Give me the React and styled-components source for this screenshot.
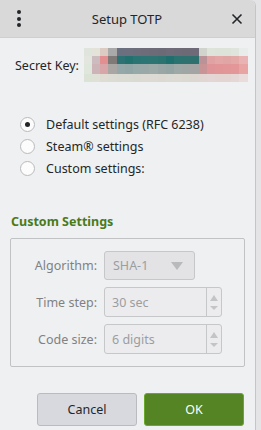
import React, { useState } from "react";
import styled, { createGlobalStyle } from "styled-components";

const Global = createGlobalStyle`
  html, body { margin: 0; padding: 0; background: #e4e4e6; }
  body { font-family: "Noto Sans", "DejaVu Sans", sans-serif; font-size: 12.5px; color: #232629; }
  * { box-sizing: border-box; }
`;

const Window = styled.div`
  width: 256px;
  height: 430px;
  background: #eff0f1;
  border-right: 1px solid #c4c5c7;
  border-top-right-radius: 6px;
  display: flex;
  flex-direction: column;
  overflow: hidden;
`;

const TitleBar = styled.div`
  height: 38px;
  background: #d9d9da;
  border-bottom: 1px solid #cfcfd1;
  display: flex;
  align-items: center;
  justify-content: space-between;
  padding: 0 12px 0 15px;
  flex-shrink: 0;
`;

const Title = styled.div`
  font-size: 13px;
  color: #232629;
`;

const Dots = styled.div`
  display: flex;
  flex-direction: column;
  gap: 2.5px;
  width: 8px;
  align-items: center;
  span {
    width: 4px;
    height: 4px;
    border-radius: 50%;
    background: #232629;
  }
`;

const CloseIcon = styled.svg`
  width: 12px;
  height: 12px;
`;

const Body = styled.div`
  padding: 9px 11px 0 15px;
  display: flex;
  flex-direction: column;
  flex: 1;
`;

const KeyRow = styled.div`
  display: flex;
  align-items: center;
  gap: 5px;
  white-space: nowrap;
  margin-top: 1px;
`;

const Mosaic = styled.div`
  display: grid;
  flex-shrink: 0;
  grid-template-columns: repeat(20, 8.2px);
  grid-template-rows: 8px 8px 10px 8px;
`;

const Cell = styled.div`
  background: ${({ c }) => c};
`;

const RadioList = styled.div`
  display: flex;
  flex-direction: column;
  gap: 6px;
  margin: 34px 0 0 5px;
`;

const RadioRow = styled.label`
  display: flex;
  align-items: center;
  gap: 11px;
  height: 16px;
`;

const RadioDot = styled.span`
  width: 15px;
  height: 15px;
  border-radius: 50%;
  border: 1px solid #b9babc;
  background: #fcfcfc;
  display: flex;
  align-items: center;
  justify-content: center;
  &::after {
    content: "";
    width: 5px;
    height: 5px;
    border-radius: 50%;
    background: ${({ checked }) => (checked ? "#232629" : "transparent")};
  }
`;

const Heading = styled.div`
  color: #4a7a1b;
  font-weight: bold;
  font-size: 12.5px;
  margin: 37px 0 0 -4px;
`;

const Group = styled.div`
  margin: 8px 0 0 -5px;
  width: 235px;
  height: 129px;
  border: 1px solid #c1c2c4;
  border-radius: 2px;
  padding: 12px 0 0 0;
  display: grid;
  grid-template-columns: 86px auto;
  row-gap: 7px;
  column-gap: 7px;
  align-items: center;
  align-content: start;
`;

const FieldLabel = styled.div`
  text-align: right;
  color: #808183;
`;

const Combo = styled.div`
  width: 91px;
  height: 29px;
  border: 1px solid #c6c7c9;
  border-radius: 3px;
  background: #e3e3e5;
  color: #9c9d9f;
  display: flex;
  align-items: center;
  justify-content: space-between;
  padding: 0 11px 0 8px;
`;

const Arrow = styled.span`
  width: 0;
  height: 0;
  border-left: 6px solid transparent;
  border-right: 6px solid transparent;
  border-top: 8px solid #b9babc;
`;

const Spin = styled.div`
  width: 118px;
  height: 30px;
  border: 1px solid #c6c7c9;
  border-radius: 3px;
  background: #ececee;
  color: #9c9d9f;
  display: flex;
`;

const SpinText = styled.div`
  flex: 1;
  display: flex;
  align-items: center;
  padding-left: 7px;
`;

const SpinButtons = styled.div`
  width: 15px;
  border-left: 1px solid #c6c7c9;
  display: flex;
  flex-direction: column;
  align-items: center;
  justify-content: center;
  gap: 5px;
`;

const Tri = styled.span`
  width: 0;
  height: 0;
  border-left: 4px solid transparent;
  border-right: 4px solid transparent;
  ${({ up }) => (up ? "border-bottom: 6px solid #c3c4c6;" : "border-top: 4px solid #c3c4c6;")}
`;

const Buttons = styled.div`
  margin-top: auto;
  margin-bottom: 4px;
  display: flex;
  justify-content: flex-end;
  gap: 7px;
`;

const Button = styled.button`
  width: 100px;
  height: 33px;
  border-radius: 3px;
  font-family: inherit;
  font-size: 12.5px;
  border: 1px solid ${({ primary }) => (primary ? "#6aa82c" : "#babbbf")};
  background: ${({ primary }) => (primary ? "#548423" : "#d8d9de")};
  color: ${({ primary }) => (primary ? "#ffffff" : "#232629")};
`;

const mosaic = [
  ["#dfe5dc", "#e3e3da", "#dccbc3", "#a9a9a9", "#6b7080", "#6d6f7e", "#6e6d7b", "#6f6c7a", "#6e6b78", "#6d6a77", "#6f6b78", "#6e6a77", "#6d6a76", "#6e6a77", "#d0d4cc", "#dee4d9", "#dde3d9", "#dde3d8", "#dfe4dc", "#e8ecea"],
  ["#e2e6df", "#ccbcc0", "#e38e90", "#7f7a78", "#2c7173", "#22716f", "#2a7473", "#2b7574", "#2d7472", "#2a7371", "#1e6f6e", "#2b7370", "#2e716f", "#2e706e", "#bb9298", "#e0a2a3", "#e2a7a6", "#e0a5a5", "#e3a9a7", "#e8b3b2"],
  ["#dfe6dc", "#cdb4b8", "#d8a6a8", "#aaa6a4", "#95a8a9", "#93a6a7", "#98a9a9", "#9aa9a8", "#9eaaa8", "#9aa6a5", "#95a5a4", "#9ea8a6", "#a0a6a4", "#a3a4a3", "#c99496", "#df9597", "#e19597", "#e29698", "#e39799", "#e8a3a3"],
  ["#dae3d6", "#dfe0d6", "#dfdcd4", "#dddcd4", "#dadbd2", "#dadbd3", "#dbdad2", "#dcdad3", "#ddd9d3", "#dcd9d3", "#dcdad4", "#ddd9d3", "#dcd8d2", "#ddd7d2", "#e2d6d2", "#e4d6d4", "#e4d5d3", "#e4d5d3", "#e5d7d5", "#eadcdb"],
];

const options = ["Default settings (RFC 6238)", "Steam® settings", "Custom settings:"];

export default function App() {
  const [choice, setChoice] = useState(0);
  return (
    <>
      <Global />
      <Window>
        <TitleBar>
          <Dots><span /><span /><span /></Dots>
          <Title>Setup TOTP</Title>
          <CloseIcon viewBox="0 0 12 12">
            <path d="M1.5 1.5 L10.5 10.5 M10.5 1.5 L1.5 10.5" stroke="#232629" strokeWidth="1.6" />
          </CloseIcon>
        </TitleBar>
        <Body>
          <KeyRow>
            <span>Secret Key:</span>
            <Mosaic>
              {mosaic.flatMap((row, r) => row.map((c, i) => <Cell key={r + "-" + i} c={c} />))}
            </Mosaic>
          </KeyRow>
          <RadioList>
            {options.map((o, i) => (
              <RadioRow key={o} onClick={() => setChoice(i)}>
                <RadioDot checked={choice === i} />
                {o}
              </RadioRow>
            ))}
          </RadioList>
          <Heading>Custom Settings</Heading>
          <Group>
            <FieldLabel>Algorithm:</FieldLabel>
            <Combo>SHA-1<Arrow /></Combo>
            <FieldLabel>Time step:</FieldLabel>
            <Spin>
              <SpinText>30 sec</SpinText>
              <SpinButtons><Tri up /><Tri /></SpinButtons>
            </Spin>
            <FieldLabel>Code size:</FieldLabel>
            <Spin>
              <SpinText>6 digits</SpinText>
              <SpinButtons><Tri up /><Tri /></SpinButtons>
            </Spin>
          </Group>
          <Buttons>
            <Button>Cancel</Button>
            <Button primary>OK</Button>
          </Buttons>
        </Body>
      </Window>
    </>
  );
}
